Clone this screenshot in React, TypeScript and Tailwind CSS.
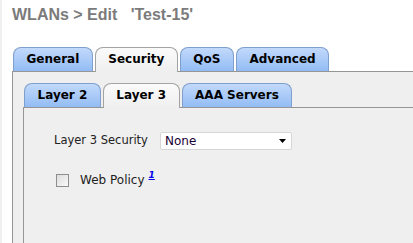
export default function App() {
  const outerTabs = ["General", "Security", "QoS", "Advanced"];
  const innerTabs = ["Layer 2", "Layer 3", "AAA Servers"];

  const tabClass = (active: boolean) =>
    active
      ? "relative z-10 -mb-px h-[25px] px-[12.5px] rounded-t-[8px] border border-b-0 border-[#a3a3a3] bg-gradient-to-b from-[#fbfbfb] to-[#efefef] text-[12px] font-bold leading-[23px] text-black"
      : "h-[24px] px-[12.5px] rounded-t-[8px] border border-b-0 border-[#7f9fcc] bg-gradient-to-b from-[#c2d9fb] to-[#93bcf4] text-[12px] font-bold leading-[23px] text-black";

  return (
    <div
      className="flex h-[243px] w-[413px] overflow-hidden bg-white"
      style={{ fontFamily: '"DejaVu Sans", Verdana, sans-serif' }}
    >
      <div className="w-[2px] shrink-0 bg-[#f0f0f0]" />
      <div className="flex min-w-0 flex-1 flex-col pl-[10px]">
        <h1
          className="pt-[6px] text-[16px] font-bold leading-[18px] text-[#7b7b7b] whitespace-pre"
          style={{ fontFamily: '"Liberation Sans", Arial, sans-serif' }}
        >
          {"WLANs > Edit   'Test-15'"}
        </h1>

        <div className="mt-[23px] ml-px flex items-end gap-[2px]">
          {outerTabs.map((t) => (
            <div key={t} className={tabClass(t === "Security")}>
              {t}
            </div>
          ))}
        </div>

        <div className="-mr-[20px] flex flex-1 flex-col border-l border-t border-[#959595] bg-[#efefef] pl-[10px] pt-[11px]">
          <div className="ml-px flex items-end gap-[2px]">
            {innerTabs.map((t) => (
              <div key={t} className={tabClass(t === "Layer 3")}>
                {t}
              </div>
            ))}
          </div>

          <div className="flex flex-1 flex-col border-l border-t border-[#959595] pl-[30px] pt-[24px] text-[11.5px] text-[#222]">
            <div className="flex items-center">
              <span className="w-[106px]">Layer 3 Security</span>
              <div className="flex h-[18px] w-[132px] items-center justify-between rounded-[2px] border border-[#d6d6d6] bg-white pl-[4px] pr-[5px] text-[12px] text-[#1a0033]">
                <span>None</span>
                <svg width="7" height="4" viewBox="0 0 7 4">
                  <path d="M0 0h7L3.5 4z" fill="#000" />
                </svg>
              </div>
            </div>

            <div className="mt-[19px] flex items-center">
              <span className="ml-[2px] h-[13px] w-[13px] border border-[#8e8e8e] bg-gradient-to-br from-[#dcdcdc] to-[#fafafa]" />
              <span className="ml-[11px] text-[12px]">Web Policy</span>
              <a className="mb-[9px] ml-[4px] text-[9px] font-bold italic text-[#0000ee] underline">
                1
              </a>
            </div>
          </div>
        </div>
      </div>
    </div>
  );
}
